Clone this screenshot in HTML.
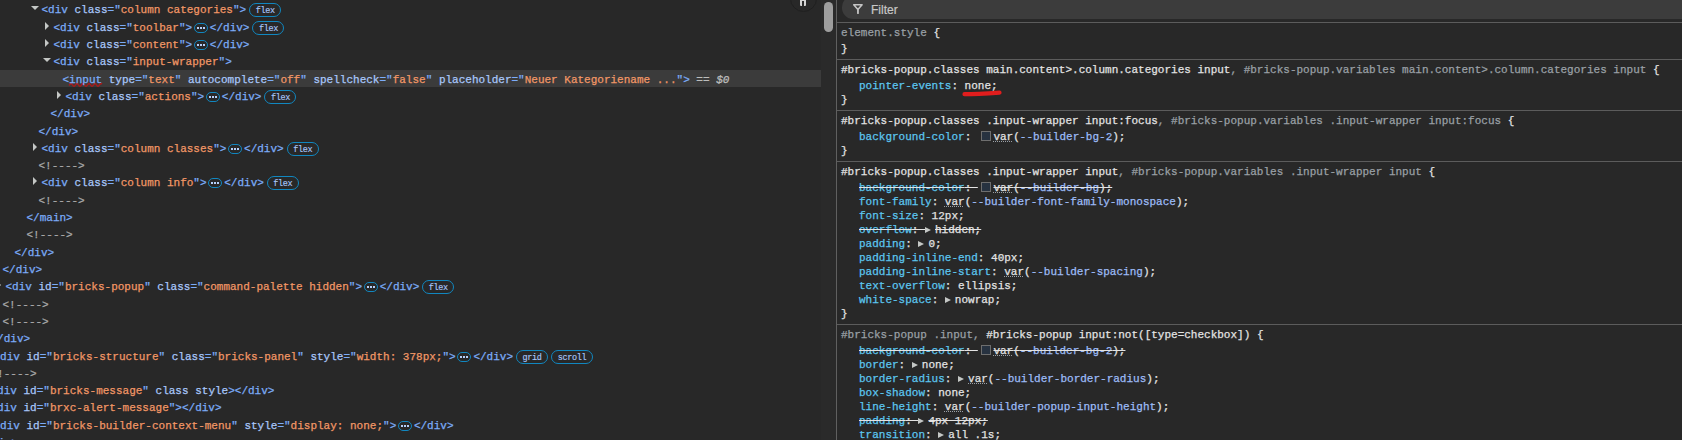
<!DOCTYPE html>
<html><head><meta charset="utf-8"><style>
*{box-sizing:border-box}
html,body{margin:0;padding:0}
body{width:1682px;height:440px;overflow:hidden;background:#282828;position:relative;font-family:"Liberation Mono",monospace;font-size:11px;color:#e3e3e3}
#tree{position:absolute;left:0;top:0;width:821px;height:440px;overflow:hidden}
.row,.srow{position:absolute;white-space:pre;height:17px;line-height:17px;-webkit-text-stroke:0.25px currentColor}
.t{color:#7cacf8} .a{color:#a8c7fa} .v{color:#f29766} .c{color:#aaaaaa}
.hint{color:#bdbdbd} .hint em{font-style:italic}
.selbg{position:absolute;left:0;width:821px;height:17px;background:#3b3b3b}
.trd{position:absolute;width:0;height:0;border-left:4px solid transparent;border-right:4px solid transparent;border-top:4px solid #c4c7c5}
.trr{position:absolute;width:0;height:0;border-top:4px solid transparent;border-bottom:4px solid transparent;border-left:4.5px solid #c4c7c5}
.ell{display:inline-block;vertical-align:top;position:relative;top:2.9px;width:14px;height:10px;margin:0 2.2px 0 1.5px;border:1px solid #1187c0;border-radius:5px;text-align:center;line-height:6px;padding-top:3px}
.ell i{display:inline-block;width:2px;height:2px;background:#b4cff8;margin:0 0.5px;vertical-align:top}
.bd{display:inline-block;vertical-align:top;position:relative;top:0.9px;height:14px;margin-left:3px;border:1px solid #1187c0;border-radius:7px;font-family:"Liberation Mono",monospace;font-size:8.5px;letter-spacing:-0.35px;line-height:14.5px;-webkit-text-stroke:0.15px currentColor;text-align:center;color:#a8c7fa}
#sb{position:absolute;left:821px;top:0;width:15px;height:440px;background:#2a2a2a}
#thumb{position:absolute;left:824px;top:2px;width:9px;height:30px;border-radius:4.5px;background:#9e9e9e}
#vdiv{position:absolute;left:836px;top:0;width:1px;height:440px;background:#606060}
#styles{position:absolute;left:837px;top:0;width:845px;height:440px;overflow:hidden}
.sep{position:absolute;left:0;width:845px;height:1px;background:#5c5c5c}
#pill{position:absolute;left:5px;top:-4px;width:900px;height:23px;border-radius:11px;background:#3c3c3c}
#filt{position:absolute;left:34px;top:3px;-webkit-text-stroke:0.2px currentColor;font-family:"Liberation Sans",sans-serif;font-size:12px;line-height:15px;color:#c7c7c7}
.p{color:#5cc6ef} .dm{color:#9aa0a6} .vn{color:#9dbcf7}
.vu{text-decoration:underline dotted #9aa0a6;text-underline-offset:1px}
.st{text-decoration:line-through;text-decoration-color:#e3e3e3}
.sw{display:inline-block;width:10px;height:10px;border:1px solid #6e6e6e;background:#273240;margin:0 2.3px 0 3.3px;vertical-align:-1px}
.ptri{display:inline-block;width:0;height:0;border-top:3.5px solid transparent;border-bottom:3.5px solid transparent;border-left:6px solid #c4c7c5;margin:0 4px 0 0;vertical-align:0px}
</style></head><body>
<div id="tree">
<div class="row" style="top:2px;left:41.5px"><span class="t">&lt;div</span> <span class="a">class</span><span class="t">=&quot;</span><span class="v">column categories</span><span class="t">&quot;</span><span class="t">&gt;</span><span class="bd" style="width:32px">flex</span></div>
<div class="trd" style="left:31.0px;top:6px"></div>
<div class="row" style="top:20px;left:53.5px"><span class="t">&lt;div</span> <span class="a">class</span><span class="t">=&quot;</span><span class="v">toolbar</span><span class="t">&quot;</span><span class="t">&gt;</span><span class="ell"><i></i><i></i><i></i></span><span class="t">&lt;/div&gt;</span><span class="bd" style="width:32px">flex</span></div>
<div class="trr" style="left:45.0px;top:22px"></div>
<div class="row" style="top:37px;left:53.5px"><span class="t">&lt;div</span> <span class="a">class</span><span class="t">=&quot;</span><span class="v">content</span><span class="t">&quot;</span><span class="t">&gt;</span><span class="ell"><i></i><i></i><i></i></span><span class="t">&lt;/div&gt;</span></div>
<div class="trr" style="left:45.0px;top:39px"></div>
<div class="row" style="top:54px;left:53.5px"><span class="t">&lt;div</span> <span class="a">class</span><span class="t">=&quot;</span><span class="v">input-wrapper</span><span class="t">&quot;</span><span class="t">&gt;</span></div>
<div class="trd" style="left:43.0px;top:58px"></div>
<div class="selbg" style="top:70px"></div>
<svg style="position:absolute;left:0;top:0" width="821" height="440"><polyline points="69.00,85.55 69.50,84.90 70.00,84.25 70.50,83.77 71.00,83.60 71.50,83.77 72.00,84.25 72.50,84.90 73.00,85.55 73.50,86.03 74.00,86.20 74.50,86.03 75.00,85.55 75.50,84.90 76.00,84.25 76.50,83.77 77.00,83.60 77.50,83.77 78.00,84.25 78.50,84.90 79.00,85.55 79.50,86.03 80.00,86.20 80.50,86.03 81.00,85.55 81.50,84.90 82.00,84.25 82.50,83.77 83.00,83.60 83.50,83.77 84.00,84.25 84.50,84.90 85.00,85.55 85.50,86.03 86.00,86.20 86.50,86.03 87.00,85.55 87.50,84.90 88.00,84.25 88.50,83.77 89.00,83.60 89.50,83.77 90.00,84.25 90.50,84.90 91.00,85.55 91.50,86.03 92.00,86.20 92.50,86.03 93.00,85.55 93.50,84.90 94.00,84.25 94.50,83.77 95.00,83.60 95.50,83.77 96.00,84.25 96.50,84.90 97.00,85.55 97.50,86.03 98.00,86.20 98.50,86.03 99.00,85.55 99.50,84.90 100.00,84.25 100.50,83.77 101.00,83.60 101.50,83.77 102.00,84.25" stroke="#a51c1c" stroke-width="1.5" fill="none"/></svg>
<div class="row" style="top:72px;left:62.5px"><span class="t">&lt;</span><span class="t">input</span> <span class="a">type</span><span class="t">=&quot;</span><span class="v">text</span><span class="t">&quot;</span> <span class="a">autocomplete</span><span class="t">=&quot;</span><span class="v">off</span><span class="t">&quot;</span> <span class="a">spellcheck</span><span class="t">=&quot;</span><span class="v">false</span><span class="t">&quot;</span> <span class="a">placeholder</span><span class="t">=&quot;</span><span class="v">Neuer Kategoriename ...</span><span class="t">&quot;</span><span class="t">&gt;</span><span class="hint"> == <em>$0</em></span></div>
<div class="row" style="top:89px;left:65.5px"><span class="t">&lt;div</span> <span class="a">class</span><span class="t">=&quot;</span><span class="v">actions</span><span class="t">&quot;</span><span class="t">&gt;</span><span class="ell"><i></i><i></i><i></i></span><span class="t">&lt;/div&gt;</span><span class="bd" style="width:32px">flex</span></div>
<div class="trr" style="left:57.0px;top:91px"></div>
<div class="row" style="top:106px;left:50.5px"><span class="t">&lt;/div&gt;</span></div>
<div class="row" style="top:124px;left:38.5px"><span class="t">&lt;/div&gt;</span></div>
<div class="row" style="top:141px;left:41.5px"><span class="t">&lt;div</span> <span class="a">class</span><span class="t">=&quot;</span><span class="v">column classes</span><span class="t">&quot;</span><span class="t">&gt;</span><span class="ell"><i></i><i></i><i></i></span><span class="t">&lt;/div&gt;</span><span class="bd" style="width:32px">flex</span></div>
<div class="trr" style="left:33.0px;top:143px"></div>
<div class="row" style="top:158px;left:38.5px"><span class="c">&lt;!----&gt;</span></div>
<div class="row" style="top:175px;left:41.5px"><span class="t">&lt;div</span> <span class="a">class</span><span class="t">=&quot;</span><span class="v">column info</span><span class="t">&quot;</span><span class="t">&gt;</span><span class="ell"><i></i><i></i><i></i></span><span class="t">&lt;/div&gt;</span><span class="bd" style="width:32px">flex</span></div>
<div class="trr" style="left:33.0px;top:177px"></div>
<div class="row" style="top:193px;left:38.5px"><span class="c">&lt;!----&gt;</span></div>
<div class="row" style="top:210px;left:26.5px"><span class="t">&lt;/main&gt;</span></div>
<div class="row" style="top:227px;left:26.5px"><span class="c">&lt;!----&gt;</span></div>
<div class="row" style="top:245px;left:14.5px"><span class="t">&lt;/div&gt;</span></div>
<div class="row" style="top:262px;left:2.5px"><span class="t">&lt;/div&gt;</span></div>
<div class="row" style="top:279px;left:5.5px"><span class="t">&lt;div</span> <span class="a">id</span><span class="t">=&quot;</span><span class="v">bricks-popup</span><span class="t">&quot;</span> <span class="a">class</span><span class="t">=&quot;</span><span class="v">command-palette hidden</span><span class="t">&quot;</span><span class="t">&gt;</span><span class="ell"><i></i><i></i><i></i></span><span class="t">&lt;/div&gt;</span><span class="bd" style="width:32px">flex</span></div>
<div class="trr" style="left:-3.0px;top:281px"></div>
<div class="row" style="top:297px;left:2.5px"><span class="c">&lt;!----&gt;</span></div>
<div class="row" style="top:314px;left:2.5px"><span class="c">&lt;!----&gt;</span></div>
<div class="row" style="top:331px;left:-9.5px"><span class="t">&lt;/div&gt;</span></div>
<div class="row" style="top:349px;left:-6.5px"><span class="t">&lt;div</span> <span class="a">id</span><span class="t">=&quot;</span><span class="v">bricks-structure</span><span class="t">&quot;</span> <span class="a">class</span><span class="t">=&quot;</span><span class="v">bricks-panel</span><span class="t">&quot;</span> <span class="a">style</span><span class="t">=&quot;</span><span class="v">width: 378px;</span><span class="t">&quot;</span><span class="t">&gt;</span><span class="ell"><i></i><i></i><i></i></span><span class="t">&lt;/div&gt;</span><span class="bd" style="width:32px">grid</span><span class="bd" style="width:42px">scroll</span></div>
<div class="trr" style="left:-15.0px;top:351px"></div>
<div class="row" style="top:366px;left:-9.5px"><span class="c">&lt;!----&gt;</span></div>
<div class="row" style="top:383px;left:-9.5px"><span class="t">&lt;div</span> <span class="a">id</span><span class="t">=&quot;</span><span class="v">bricks-message</span><span class="t">&quot;</span> <span class="a">class</span> <span class="a">style</span><span class="t">&gt;</span><span class="t">&lt;/div&gt;</span></div>
<div class="row" style="top:400px;left:-9.5px"><span class="t">&lt;div</span> <span class="a">id</span><span class="t">=&quot;</span><span class="v">brxc-alert-message</span><span class="t">&quot;</span><span class="t">&gt;</span><span class="t">&lt;/div&gt;</span></div>
<div class="row" style="top:418px;left:-6.5px"><span class="t">&lt;div</span> <span class="a">id</span><span class="t">=&quot;</span><span class="v">bricks-builder-context-menu</span><span class="t">&quot;</span> <span class="a">style</span><span class="t">=&quot;</span><span class="v">display: none;</span><span class="t">&quot;</span><span class="t">&gt;</span><span class="ell"><i></i><i></i><i></i></span><span class="t">&lt;/div&gt;</span></div>
<div class="trr" style="left:-15.0px;top:420px"></div>
<div class="row" style="top:435px;left:-21.5px"><span class="t">&lt;/div&gt;</span></div>
<div style="position:absolute;left:789.5px;top:-15.5px;width:27px;height:27px;border-radius:50%;border:1.5px solid #202020;filter:blur(0.4px)"></div>
<div style="position:absolute;left:800px;top:-2px;width:6px;height:8px;background:#d4d4d4;border-radius:0 0 1px 1px"></div>
<div style="position:absolute;left:802.4px;top:1.3px;width:1.2px;height:5px;background:#2a2a2a"></div>
</div>
<div id="sb"></div><div id="thumb"></div><div id="vdiv"></div>
<div id="styles">
<div id="pill"></div><svg style="position:absolute;left:0;top:0" width="40" height="20"><path d="M16.7 4.7 H25.1 L20.9 9.6 Z" fill="none" stroke="#c4c4c4" stroke-width="1.5" stroke-linejoin="round"/><rect x="20.05" y="9.2" width="1.8" height="4.7" fill="#c4c4c4"/></svg><div id="filt">Filter</div>
<div class="sep" style="top:22px"></div>
<div class="srow" style="top:25px;left:4px"><span class="dm">element.style</span> {</div>
<div class="srow" style="top:41px;left:4px">}</div>
<div class="sep" style="top:59px"></div>
<div class="srow" style="top:62px;left:4px">#bricks-popup.classes main.content&gt;.column.categories input<span class="dm">, #bricks-popup.variables main.content&gt;.column.categories input</span> {</div>
<div class="srow pl" style="top:78px;left:22px"><span class="p">pointer-events</span>: none;</div>
<div class="srow" style="top:92px;left:4px">}</div>
<div class="sep" style="top:110px"></div>
<div class="srow" style="top:113px;left:4px">#bricks-popup.classes .input-wrapper input:focus<span class="dm">, #bricks-popup.variables .input-wrapper input:focus</span> {</div>
<div class="srow pl" style="top:129px;left:22px"><span class="p">background-color</span>: <span class="sw"></span><span class="vu">var</span>(<span class="vn">--builder-bg-2</span>);</div>
<div class="srow" style="top:143px;left:4px">}</div>
<div class="sep" style="top:161px"></div>
<div class="srow" style="top:164px;left:4px">#bricks-popup.classes .input-wrapper input<span class="dm">, #bricks-popup.variables .input-wrapper input</span> {</div>
<div class="srow pl st" style="top:180px;left:22px"><span class="p">background-color</span>: <span class="sw"></span><span class="vu">var</span>(<span class="vn">--builder-bg</span>);</div>
<div class="srow pl" style="top:194px;left:22px"><span class="p">font-family</span>: <span class="vu">var</span>(<span class="vn">--builder-font-family-monospace</span>);</div>
<div class="srow pl" style="top:208px;left:22px"><span class="p">font-size</span>: 12px;</div>
<div class="srow pl st" style="top:222px;left:22px"><span class="p">overflow</span>: <span class="ptri"></span>hidden;</div>
<div class="srow pl" style="top:236px;left:22px"><span class="p">padding</span>: <span class="ptri"></span>0;</div>
<div class="srow pl" style="top:250px;left:22px"><span class="p">padding-inline-end</span>: 40px;</div>
<div class="srow pl" style="top:264px;left:22px"><span class="p">padding-inline-start</span>: <span class="vu">var</span>(<span class="vn">--builder-spacing</span>);</div>
<div class="srow pl" style="top:278px;left:22px"><span class="p">text-overflow</span>: ellipsis;</div>
<div class="srow pl" style="top:292px;left:22px"><span class="p">white-space</span>: <span class="ptri"></span>nowrap;</div>
<div class="srow" style="top:306px;left:4px">}</div>
<div class="sep" style="top:324px"></div>
<div class="srow" style="top:327px;left:4px"><span class="dm">#bricks-popup .input, </span>#bricks-popup input:not([type=checkbox]) {</div>
<div class="srow pl st" style="top:343px;left:22px"><span class="p">background-color</span>: <span class="sw"></span><span class="vu">var</span>(<span class="vn">--builder-bg-2</span>);</div>
<div class="srow pl" style="top:357px;left:22px"><span class="p">border</span>: <span class="ptri"></span>none;</div>
<div class="srow pl" style="top:371px;left:22px"><span class="p">border-radius</span>: <span class="ptri"></span><span class="vu">var</span>(<span class="vn">--builder-border-radius</span>);</div>
<div class="srow pl" style="top:385px;left:22px"><span class="p">box-shadow</span>: none;</div>
<div class="srow pl" style="top:399px;left:22px"><span class="p">line-height</span>: <span class="vu">var</span>(<span class="vn">--builder-popup-input-height</span>);</div>
<div class="srow pl st" style="top:413px;left:22px"><span class="p">padding</span>: <span class="ptri"></span>4px 12px;</div>
<div class="srow pl" style="top:427px;left:22px"><span class="p">transition</span>: <span class="ptri"></span>all .1s;</div>
<div class="srow" style="top:441px;left:4px">}</div>
</div>
<svg style="position:absolute;left:0;top:0" width="1682" height="440"><path d="M964.5 94.2 C975 94.2 985 93.6 999.5 92.6" stroke="#e11d1d" stroke-width="4.2" fill="none" stroke-linecap="round"/></svg>
</body></html>
